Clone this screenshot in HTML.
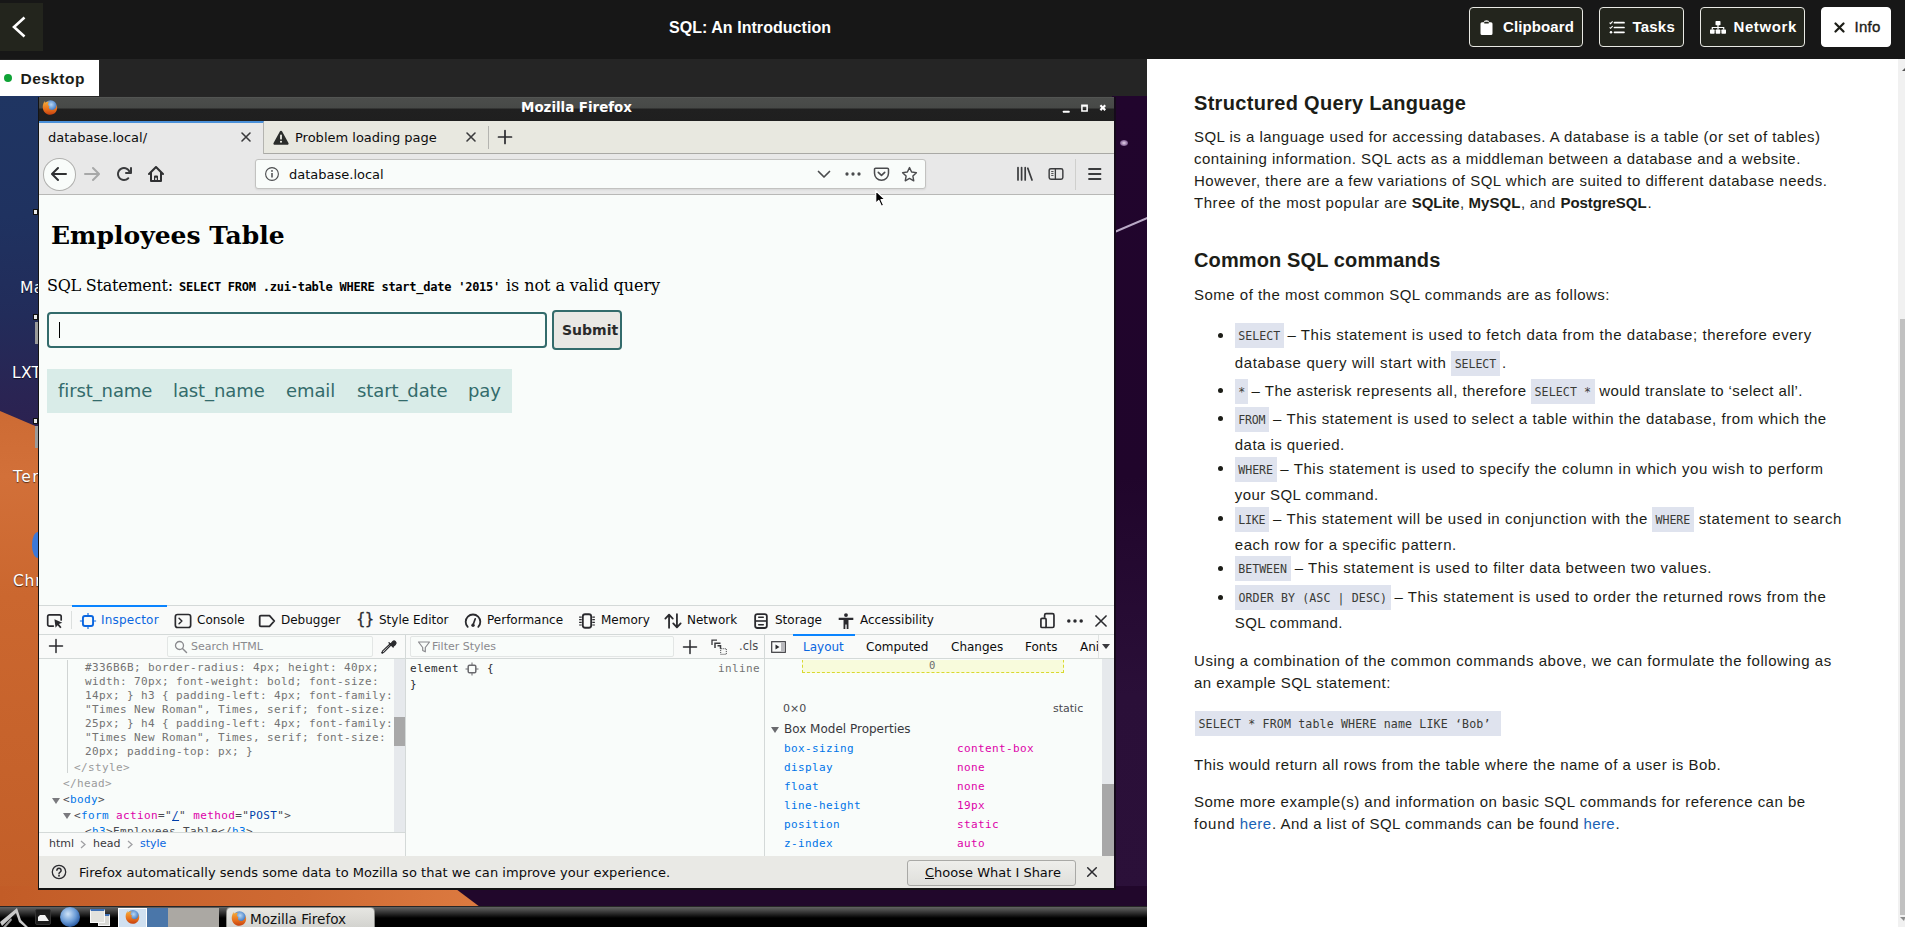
<!DOCTYPE html>
<html lang="en">
<head>
<meta charset="utf-8">
<title>SQL: An Introduction</title>
<style>
*{box-sizing:border-box}
html,body{margin:0;padding:0}
body{width:1905px;height:927px;overflow:hidden;background:#fff;position:relative;font-family:"Liberation Sans",sans-serif;color:#1c1d17}
.abs{position:absolute}
svg{display:block}
/* ---------- top header ---------- */
#hdr{position:absolute;left:0;top:0;width:1905px;height:59px;background:#171717}
#back{position:absolute;left:0;top:3px;width:43px;height:48px;background:#23251d}
#title{position:absolute;left:550px;width:400px;top:18px;letter-spacing:.05px;text-align:center;color:#fff;font-weight:700;font-size:16px;line-height:20px}
.hbtn{position:absolute;top:7px;height:40px;border:1px solid #e9e9e4;border-radius:4px;background:#23251d;color:#fff;font-weight:700;font-size:15px;line-height:38px;white-space:nowrap}
.hbtn svg{position:absolute}
.hbtn span{position:absolute;top:0}
/* ---------- desktop strip ---------- */
#strip{position:absolute;left:0;top:59px;width:1147px;height:37px;background:#252525}
#dtab{position:absolute;left:0;top:1px;width:99px;height:36px;background:#fff;color:#1c1d17;font-weight:700;font-size:15.500px;line-height:36px}
#dtab i{position:absolute;left:4px;top:14px;width:8px;height:8px;border-radius:50%;background:#0fa336}
#dtab span{position:absolute;left:20.500px;top:1px;letter-spacing:.45px}
/* ---------- desktop ---------- */
#desk{position:absolute;left:0;top:96px;width:1147px;height:831px;overflow:hidden;background:#21072c}
/* ---------- right panel ---------- */
#panel{position:absolute;left:1147px;top:59px;width:758px;height:868px;background:#fff;overflow:hidden}

/* ---------- wallpaper ---------- */
#wpL{position:absolute;left:0;top:0;width:40px;height:811px;background:linear-gradient(180deg,#1f3562 0px,#1f3260 120px,#222c5a 220px,#2a2453 300px,#2c2150 340px)}#wpO{position:absolute;left:0;top:300px;width:40px;height:511px;background:linear-gradient(180deg,#cc6a33 0,#d27039 80px,#cb672f 200px,#c25e28 511px);clip-path:polygon(0 15px,40px 32px,40px 511px,0 511px)}
#wpB{position:absolute;left:0;top:790px;width:1147px;height:21px;background:#21072b}
#wpBo{position:absolute;left:0;top:790px;width:480px;height:21px;background:linear-gradient(90deg,#c25c27 0,#cf6a33 300px,#dc7a40 480px);clip-path:polygon(0 0,452px 0,480px 21px,0 21px)}
#wpR{position:absolute;left:1112px;top:0;width:35px;height:811px;background:linear-gradient(180deg,#21052d 0,#20052b 380px,#2a0f38 600px,#2b1039 811px)}
/* ---------- firefox window ---------- */
#ff{position:absolute;left:38px;top:1px;width:1078px;height:793px;background:#f9fcfa;border-left:1px solid #141414;border-right:2px solid #150a1a;border-bottom:2px solid #141414;font-family:"DejaVu Sans","Liberation Sans",sans-serif;font-size:13px;color:#0c0c0d}
#ff .in{position:absolute;left:0;top:0;width:1075px;height:791px;overflow:hidden}
#tbar{position:absolute;left:0;top:0;width:1075px;height:24px;background:linear-gradient(180deg,#5a5c5a 0,#4b4d4b 1px,#474947 11px,#202020 12px,#1f1f1f 24px)}
#tbar .t{position:absolute;left:0;width:1075px;top:3px;text-align:center;color:#fff;font-weight:700;font-size:13.4px;line-height:16px}
#tabs{position:absolute;left:0;top:24px;width:1075px;height:33px;background:#e8e8e0;border-bottom:1px solid #a9a9a5}
#tab1{position:absolute;left:0;top:0;width:225px;height:33px;background:#e8e8e8;border-top:2px solid #4a90d9;border-right:1px solid #b4b4b0}
#tabs .lbl{position:absolute;top:8.5px;line-height:16px;white-space:nowrap}
#nav{position:absolute;left:0;top:57px;width:1075px;height:41px;background:#e8e8e8;border-bottom:1px solid #b8b8b6}
#url{position:absolute;left:216px;top:4.500px;width:671px;height:30px;background:#f9fcfa;border:1px solid #c2c2c0;border-radius:3px;box-shadow:0 1px 2px rgba(0,0,0,.08)}
#url .lbl{position:absolute;left:33px;top:6px;line-height:17px}
#bk{position:absolute;left:3.5px;top:3.5px;width:33.5px;height:33px;border-radius:50%;background:#f9fcfa;border:1px solid #b0b0ae}

.ic{position:absolute}

/* ---------- page content ---------- */
#pg{position:absolute;left:0;top:98px;width:1075px;height:410px;background:#f9fcfa;color:#000}
#pg h3{position:absolute;margin:0;left:12px;top:26px;font-family:"DejaVu Serif","Liberation Serif",serif;font-weight:700;font-size:25px;line-height:30px;white-space:nowrap}
#pg .st{position:absolute;left:8px;top:80.5px;font-family:"DejaVu Serif","Liberation Serif",serif;font-size:16px;line-height:20px;white-space:nowrap}
#pg .st code{position:absolute;left:132px;top:1px;font-family:"DejaVu Sans Mono","Liberation Mono",monospace;font-weight:700;font-size:12px;letter-spacing:-.245px}
#pg .st b{position:absolute;left:459px;top:0;font-weight:400;letter-spacing:-.07px}
#pg .inp{position:absolute;left:8px;top:117px;width:500px;height:36px;border:2px solid #336b6b;border-radius:4px;background:#f9fcfa}
#pg .inp i{position:absolute;left:10px;top:8px;width:1px;height:16px;background:#000}
#pg .sub{position:absolute;left:513px;top:115px;width:70px;height:40px;border:2px solid #336b6b;border-radius:4px;background:#e9e8e4;font-family:"DejaVu Sans","Liberation Sans",sans-serif;font-weight:700;font-size:14px;line-height:36px;color:#2a2a2a;white-space:nowrap;overflow:hidden}
#pg .sub span{position:absolute;left:8px;top:0}
#pg .tbl{position:absolute;left:8px;top:174px;width:465px;height:43.5px;background:#d9ece8;font-family:"DejaVu Sans","Liberation Sans",sans-serif;font-size:18px;color:#336b6b;line-height:43px}
#pg .tbl span{position:absolute;top:0;white-space:nowrap;letter-spacing:-.1px}

/* ---------- devtools ---------- */
#dt{position:absolute;left:0;top:508px;width:1075px;height:283px;background:#f9fcfa;font-size:12px;color:#0c0c0d}
#dt .tb1{position:absolute;left:0;top:0;width:1075px;height:30px;background:#f9faf9;border-top:1px solid #d4d9d8;border-bottom:1px solid #d4d9d8}
#dt .tb1 span{position:absolute;top:6px;line-height:16px;white-space:nowrap}
#dt .tb2{position:absolute;left:0;top:30px;width:1075px;height:24px;background:#f9faf9;border-bottom:1px solid #d4d9d8}
#dt .tb2 span{position:absolute;top:3px;line-height:16px;white-space:nowrap}
#dt .sb{position:absolute;top:1px;height:21px;background:#f9fcfa;border:1px solid #e3e6e5;border-radius:2px}
.mono{font-family:"DejaVu Sans Mono","Liberation Mono",monospace;font-size:11px;letter-spacing:.378px;white-space:pre}
#mk{position:absolute;left:0;top:55px;width:355px;height:172px;overflow:hidden}
#mk div{position:absolute;line-height:14px;height:14px}
#mk .g{color:#737373}
#mk .lg{color:#9a9a9a}
#mk .t{color:#0074e8}
#mk .a{color:#dd00a9}
#mk .v{color:#003eaa}
#mk .p{color:#4a4a4f}
.tri{position:absolute;width:0;height:0;border-left:4.5px solid transparent;border-right:4.5px solid transparent;border-top:6px solid #7a7a7e}
#bc{position:absolute;left:0;top:227px;width:366px;height:24px;background:#f9faf9;border-top:1px solid #d4d9d8}
#bc span{position:absolute;top:2.800px;line-height:16px;font-size:11px}
#nb{position:absolute;left:0;top:251px;width:1075px;height:32px;background:#e9e9e5;font-size:13px}
#nb span{position:absolute;top:8.600px;line-height:16px;white-space:nowrap}
#nb .btn{position:absolute;left:868px;top:3.500px;width:169px;height:26px;border:1px solid #a9a9a6;border-radius:3px;background:linear-gradient(#eeeeeb,#dfdfdb)}
#ly .k{position:absolute;left:19px;color:#0074e8}
#ly .val{position:absolute;left:192px;color:#dd00a9}
#ly div{line-height:14px}

/* ---------- taskbar ---------- */
#tk{position:absolute;left:0;top:810px;width:1147px;height:21px;background:linear-gradient(180deg,#0a0a0a 0,#5e5e5e 1.500px,#4a4a4a 4px,#1c1c1c 9px,#000 12px,#000 21px)}
#tk .pg{position:absolute;top:2px;height:19px}
#tk .tbtn{position:absolute;left:226px;top:1px;width:149px;height:22px;border:1px solid #8a8a86;border-radius:4px 4px 0 0;background:linear-gradient(#e6e6e2,#d2d2ce);font-family:"DejaVu Sans","Liberation Sans",sans-serif;font-size:13.600px;color:#111;line-height:20px}
#tk .tbtn span{position:absolute;left:23px;top:1px;white-space:nowrap}
.dl{position:absolute;color:#fff;font-family:"DejaVu Sans","Liberation Sans",sans-serif;font-size:15.500px;line-height:18px;white-space:nowrap;text-shadow:0 1px 1px rgba(0,0,0,.6)}

#panel span{position:absolute;white-space:pre;font-size:15px;line-height:22px;color:#1c1d17}
#panel span.h{font-size:20px;font-weight:700;line-height:26px}
#panel span.b{font-weight:700}
#panel span.a{color:#1a62b5}
#panel code{position:absolute;height:25px;background:#dfe3ee;font-family:"DejaVu Sans Mono","Liberation Mono",monospace;font-size:11.600px;line-height:26px;color:#3a3b36;white-space:pre;padding-left:3.500px;overflow:hidden}
#panel i{position:absolute;width:5px;height:5px;border-radius:50%;background:#1c1d17}
#sbar{position:absolute;left:751px;top:0;width:7px;height:868px;background:#f1f1f1}
#sbar b{position:absolute;left:2px;top:260px;width:5px;height:596px;background:#c1c1c1}
</style>
</head>
<body>
<div id="hdr">
  <div id="back"><svg width="43" height="48" viewBox="0 0 43 48"><path d="M24.5 14.5 L14 24 L24.5 33.5" fill="none" stroke="#fff" stroke-width="2.600" stroke-linecap="butt"/></svg></div>
  <div id="title">SQL: An Introduction</div>
  <div class="hbtn" style="left:1469px;width:114px"><svg style="left:10px;top:12px" width="13" height="15" viewBox="0 0 13 15"><path d="M2 2.200h1.800a2.700 1.900 0 0 1 5.400 0H11a1.500 1.500 0 0 1 1.500 1.500V13.500A1.500 1.500 0 0 1 11 15H2A1.500 1.500 0 0 1 .5 13.500V3.700A1.500 1.500 0 0 1 2 2.200z" fill="#fff"/><rect x="4.200" y="1.800" width="4.600" height="1.700" rx=".6" fill="#23251d"/></svg><span style="left:33px;letter-spacing:.1px">Clipboard</span></div>
  <div class="hbtn" style="left:1599px;width:85px"><svg style="left:9px;top:13px" width="16" height="13" viewBox="0 0 16 13"><path d="M5.500 1.700h9.500M5.500 6.500h9.500M5.500 11.300h9.500" stroke="#fff" stroke-width="1.700" stroke-linecap="round"/><path d="M.6 1.600l1 1L3.600.4M.6 6.300l1 1 2-2.200" fill="none" stroke="#fff" stroke-width="1.100"/><circle cx="2" cy="11.300" r="1.250" fill="#fff"/></svg><span style="left:32.500px;letter-spacing:.2px">Tasks</span></div>
  <div class="hbtn" style="left:1700px;width:105px"><svg style="left:9px;top:13px" width="16" height="13" viewBox="0 0 16 13"><g fill="#fff"><rect x="5.500" y="0" width="5" height="4.300" rx=".7"/><rect x="0" y="8.500" width="4.600" height="4.300" rx=".7"/><rect x="5.700" y="8.500" width="4.600" height="4.300" rx=".7"/><rect x="11.400" y="8.500" width="4.600" height="4.300" rx=".7"/></g><path d="M8 4v4.500M2.300 8.500v-2h11.400v2" fill="none" stroke="#fff" stroke-width="1.200"/></svg><span style="left:32.500px;letter-spacing:.6px">Network</span></div>
  <div class="hbtn" style="left:1821px;width:70px;background:#fff;color:#1c1d17;border-color:#fff"><svg style="left:12px;top:14px" width="11" height="11" viewBox="0 0 11 11"><path d="M1.500 1.500l8 8M9.500 1.500l-8 8" stroke="#1c1d17" stroke-width="2.200" stroke-linecap="round"/></svg><span style="left:32.500px;letter-spacing:.3px;font-weight:400;-webkit-text-stroke:.35px #1c1d17">Info</span></div>
</div>
<div id="strip"><div id="dtab"><i></i><span>Desktop</span></div></div>
<div id="desk">
<div class="ic" style="left:38px;top:0;width:1078px;height:1px;background:#262626"></div><div id="wpL"></div><div id="wpO"></div><div id="wpR"></div><div id="wpB"></div><div id="wpBo"></div>
<div class="dl" style="left:20px;top:183px;letter-spacing:.5px">Ma</div><div class="dl" style="left:12px;top:268px;letter-spacing:.3px">LXT</div><div class="dl" style="left:13px;top:372px;letter-spacing:1.500px">Ter</div><div class="dl" style="left:13px;top:476px;letter-spacing:.8px">Chr</div>
<div class="ic" style="left:33px;top:113px;width:5px;height:6px;background:#e8e8e8;border:1px solid #111"></div><div class="ic" style="left:33px;top:218px;width:5px;height:6px;background:#e8e8e8;border:1px solid #111"></div><div class="ic" style="left:33px;top:322px;width:5px;height:6px;background:#e8e8e8;border:1px solid #111"></div>
<div class="ic" style="left:35px;top:226px;width:3px;height:22px;background:#9a9a9a"></div><div class="ic" style="left:35px;top:330px;width:3px;height:22px;background:#9a9a9a"></div>
<div class="ic" style="left:32px;top:436px;width:12px;height:26px;border-radius:50%;background:#3b78d8"></div>
<div class="ic" style="left:1120px;top:44px;width:8px;height:6px;border-radius:50%;background:radial-gradient(#e8d8ee,#8a6a9a 60%,rgba(60,30,80,0) 100%)"></div>
<div class="ic" style="left:1110px;top:128px;width:42px;height:2px;background:#b9a9c6;transform:rotate(-23deg);transform-origin:50% 50%"></div>
<div id="ff"><div class="in">
  <div id="tbar"><div class="t">Mozilla Firefox</div>
<svg class="ic" style="left:2px;top:1px" width="18" height="18" viewBox="0 0 18 18"><defs><radialGradient id="fg1" cx=".55" cy=".35" r=".6"><stop offset="0" stop-color="#b9d6f2"/><stop offset=".6" stop-color="#5a8fd0"/><stop offset="1" stop-color="#2a4f9a"/></radialGradient><linearGradient id="fg2" x1="0" y1="0" x2="0" y2="1"><stop offset="0" stop-color="#f7b13c"/><stop offset=".6" stop-color="#e8711c"/><stop offset="1" stop-color="#c5400f"/></linearGradient></defs><circle cx="9.5" cy="8.5" r="6.3" fill="url(#fg1)"/><path d="M2.2 6.2C1.2 9 1.8 13 5 15.4c3 2.200 7.600 1.600 9.800-1.400 1.600-2.200 1.800-5.200.6-7.600.2 2-.4 3.400-1.400 4.400-1.400 1.400-3.800 1.600-5.200.4-1.200-1-1.200-2.400-.2-3.200-1.200-.2-1.800-1-1.600-2.200.1-.8.800-1.600 1.600-2C6.400 3.400 4.800 3.800 3.800 5c0-.8.200-1.600.6-2.200C3.200 3.600 2.500 4.800 2.200 6.200z" fill="url(#fg2)"/></svg>
<svg class="ic" style="left:1020px;top:5.500px" width="52" height="13.500" viewBox="0 0 54 14"><g fill="#fff"><rect x="4" y="8" width="7" height="2.2" rx=".6"/><path d="M23 1.600h7v7.400h-7zM24.600 4v3.400h3.800V4z"/><path d="M42.200 3.200l1.600-1.600 1.700 1.700 1.700-1.700 1.600 1.600-1.700 1.700 1.700 1.700-1.600 1.600-1.700-1.700-1.700 1.700-1.600-1.600 1.700-1.700z"/></g></svg>
</div>
  <div id="tabs">
    <div id="tab1"><span class="lbl" style="left:9px;top:7px">database.local/</span></div>
    <span class="lbl" style="left:256px">Problem loading page</span>
<svg class="ic" style="left:199px;top:8px" width="16" height="16" viewBox="0 0 16 16"><path d="M4 4L12 12M12 4L4 12" stroke="#3a3a3c" stroke-width="1.6" stroke-linecap="round" fill="none"/></svg><svg class="ic" style="left:424px;top:8px" width="16" height="16" viewBox="0 0 16 16"><path d="M4 4L12 12M12 4L4 12" stroke="#3a3a3c" stroke-width="1.6" stroke-linecap="round" fill="none"/></svg>
    <svg class="ic" style="left:234px;top:9px" width="16" height="15" viewBox="0 0 16 15"><path d="M8 .8a1.300 1.300 0 0 1 1.150.700l6.300 11.400a1.300 1.300 0 0 1-1.150 1.900H1.700a1.300 1.300 0 0 1-1.150-1.900L6.850 1.500A1.300 1.300 0 0 1 8 .8z" fill="#2b2d2b"/><rect x="7.100" y="4.600" width="1.800" height="5" rx=".9" fill="#f0f0e8"/><circle cx="8" cy="11.800" r="1.050" fill="#f0f0e8"/></svg>
    <div class="ic" style="left:449px;top:5px;width:1px;height:23px;background:#b4b4b0"></div>
    <svg class="ic" style="left:458px;top:8px" width="16" height="16" viewBox="0 0 16 16"><path d="M8 1.500v13M1.500 8h13" stroke="#2a2a2e" stroke-width="1.700" stroke-linecap="round"/></svg>
  </div>
  <div id="nav">
    <div id="bk"></div>
    <svg class="ic" style="left:12px;top:12px" width="16" height="16" viewBox="0 0 16 16"><path d="M15 7H3.414l4.293-4.293a1 1 0 0 0-1.414-1.414l-6 6a1 1 0 0 0 0 1.414l6 6a1 1 0 0 0 1.414-1.414L3.414 9H15a1 1 0 0 0 0-2z" fill="#2f3032"/></svg>
    <svg class="ic" style="left:45px;top:12px" width="16" height="16" viewBox="0 0 16 16"><path d="M1 7h11.586L8.293 2.707a1 1 0 0 1 1.414-1.414l6 6a1 1 0 0 1 0 1.414l-6 6a1 1 0 0 1-1.414-1.414L12.586 9H1a1 1 0 0 1 0-2z" fill="#a7a8a8"/></svg>
    <svg class="ic" style="left:77px;top:12px" width="16" height="16" viewBox="0 0 16 16"><path d="M15 1a1 1 0 0 0-1 1v2.418A6.995 6.995 0 1 0 8 15a6.954 6.954 0 0 0 4.950-2.050 1 1 0 0 0-1.414-1.414A5.019 5.019 0 1 1 12.549 6H10a1 1 0 0 0 0 2h5a1 1 0 0 0 1-1V2a1 1 0 0 0-1-1z" fill="#3a3b3d"/></svg>
    <svg class="ic" style="left:109px;top:12px" width="16" height="16" viewBox="0 0 16 16"><path d="M15.707 7.293l-7-7a1 1 0 0 0-1.414 0l-7 7a1 1 0 0 0 1.414 1.414L2 8.414V15a1 1 0 0 0 1 1h10a1 1 0 0 0 1-1V8.414l.293.293a1 1 0 0 0 1.414-1.414zM12 14H4V6.414l4-4 4 4z" fill="#2f3032"/><path d="M6 15v-4.500a1 1 0 0 1 1-1h2a1 1 0 0 1 1 1V15H8.800v-3.300H7.200V15z" fill="#2f3032"/></svg>
    <div id="url"><span class="lbl">database.local</span>
      <svg class="ic" style="left:8px;top:6.500px" width="16" height="16" viewBox="0 0 16 16"><circle cx="8" cy="8" r="6.400" fill="none" stroke="#4a4b4d" stroke-width="1.100"/><rect x="7.250" y="7" width="1.500" height="4.500" fill="#4a4b4d"/><circle cx="8" cy="4.900" r=".950" fill="#4a4b4d"/></svg>
      <svg class="ic" style="left:560px;top:6.500px" width="16" height="16" viewBox="0 0 16 16"><path d="M2.500 5.500L8 11l5.500-5.500" fill="none" stroke="#4a4b4d" stroke-width="1.700" stroke-linecap="round" stroke-linejoin="round"/></svg>
      <svg class="ic" style="left:588px;top:6.500px" width="18" height="16" viewBox="0 0 18 16"><g fill="#4a4b4d"><circle cx="3" cy="8" r="1.650"/><circle cx="9" cy="8" r="1.650"/><circle cx="15" cy="8" r="1.650"/></g></svg>
      <svg class="ic" style="left:617px;top:6.500px" width="17" height="16" viewBox="0 0 18 16"><path d="M2.800 1.800h12.400a1.200 1.200 0 0 1 1.200 1.200v4.200a7.400 7.400 0 0 1-14.800 0V3a1.200 1.200 0 0 1 1.200-1.200z" fill="none" stroke="#4a4b4d" stroke-width="1.600"/><path d="M5.600 6.200L9 9.500l3.400-3.300" fill="none" stroke="#4a4b4d" stroke-width="1.700" stroke-linecap="round" stroke-linejoin="round"/></svg>
      <svg class="ic" style="left:645px;top:6.500px" width="17" height="17" viewBox="0 0 18 18"><path d="M9 1.700l2.250 4.650 5.050.700-3.700 3.550.900 5.050L9 13.200l-4.500 2.450.900-5.050-3.700-3.550 5.050-.700z" fill="none" stroke="#4a4b4d" stroke-width="1.500" stroke-linejoin="round"/></svg>
    </div>
    <svg class="ic" style="left:977px;top:11px" width="18" height="18" viewBox="0 0 18 18"><path d="M2 2.500v12.500M5.600 2.500v12.500M9.200 2.500v12.500M11.800 3.200l4.200 11.800" stroke="#3a3b3d" stroke-width="1.700" stroke-linecap="round" fill="none"/></svg>
    <svg class="ic" style="left:1009px;top:12px" width="16" height="16" viewBox="0 0 18 18"><rect x="1.300" y="3" width="15.400" height="12" rx="2" fill="none" stroke="#3a3b3d" stroke-width="1.600"/><path d="M8.300 3v12" stroke="#3a3b3d" stroke-width="1.500"/><path d="M3.600 6.200h2.600M3.600 8.400h2.600M3.600 10.600h2.600" stroke="#3a3b3d" stroke-width="1"/></svg>
    <div class="ic" style="left:1036px;top:5px;width:1px;height:31px;background:#cfcfcd"></div>
    <svg class="ic" style="left:1047.500px;top:12px" width="16" height="16" viewBox="0 0 16 16"><path d="M2 3h11.500M2 8h11.500M2 13h11.500" stroke="#3a3b3d" stroke-width="1.800" stroke-linecap="round"/></svg>
  </div>
<div id="pg">
  <h3>Employees Table</h3>
  <div class="st"><span style="letter-spacing:-.245px">SQL Statement:</span><code>SELECT FROM .zui-table WHERE start_date '2015'</code><b>is not a valid query</b></div>
  <div class="inp"><i></i></div>
  <div class="sub"><span>Submit</span></div>
  <div class="tbl"><span style="left:11px">first_name</span><span style="left:126px">last_name</span><span style="left:239px">email</span><span style="left:310px">start_date</span><span style="left:421px">pay</span></div>
</div>
<div id="dt"><div class="tb1"><svg class="ic" style="left:7px;top:5.500px" width="18" height="18" viewBox="0 0 16 16"><path d="M13.500 7V4a1.500 1.500 0 0 0-1.500-1.500H3A1.500 1.500 0 0 0 1.500 4v7A1.500 1.500 0 0 0 3 12.500h3.500" fill="none" stroke="#2a2a2e" stroke-width="1.500" stroke-linecap="round"/><path d="M7.500 6.500l7 3-3 1.200 2.300 2.800-1.200 1-2.300-2.800-1.800 2.300z" fill="#2a2a2e"/></svg><div class="ic" style="left:32px;top:5px;width:1px;height:18px;background:#dcdfde"></div><div class="ic" style="left:33px;top:-1px;width:95px;height:2px;background:#0a84ff"></div><svg class="ic" style="left:40px;top:5.500px" width="18" height="18" viewBox="0 0 16 16"><rect x="3.500" y="3.500" width="9" height="9" rx="1.800" fill="none" stroke="#0a66e0" stroke-width="1.700"/><path d="M8 .800v2.500M8 12.700v2.500M.800 8h2.500M12.700 8h2.500" stroke="#0a66e0" stroke-width="1"/></svg><span style="left:62px;color:#0a66e0;letter-spacing:.2px">Inspector</span><svg class="ic" style="left:135px;top:5.500px" width="18" height="18" viewBox="0 0 16 16"><rect x="1.200" y="2.200" width="13.600" height="11.600" rx="2" fill="none" stroke="#2a2a2e" stroke-width="1.500"/><path d="M4.500 5.500L7 8l-2.500 2.500" fill="none" stroke="#2a2a2e" stroke-width="1.300" stroke-linecap="round" stroke-linejoin="round"/></svg><span style="left:158px">Console</span><svg class="ic" style="left:219px;top:5.500px" width="18" height="18" viewBox="0 0 16 16"><path d="M2.500 3.200h7.700l4.300 4.800-4.300 4.800H2.500a1 1 0 0 1-1-1V4.200a1 1 0 0 1 1-1z" fill="none" stroke="#2a2a2e" stroke-width="1.600" stroke-linejoin="round"/></svg><span style="left:242px">Debugger</span><span style="left:317px;top:5px;font-size:15px;letter-spacing:-.8px;font-weight:400;color:#2a2a2e;-webkit-text-stroke:.3px #2a2a2e">{}</span><span style="left:340px">Style Editor</span><svg class="ic" style="left:425px;top:5.500px" width="18" height="18" viewBox="0 0 16 16"><path d="M3.300 13.200A6.500 6.500 0 1 1 12.700 13.200" fill="none" stroke="#2a2a2e" stroke-width="1.600" stroke-linecap="round"/><path d="M8 11.500L10 6" stroke="#2a2a2e" stroke-width="1.500" stroke-linecap="round"/><circle cx="8" cy="11.800" r="1.500" fill="#2a2a2e"/></svg><span style="left:448px">Performance</span><svg class="ic" style="left:539px;top:5.500px" width="18" height="18" viewBox="0 0 16 16"><rect x="4.300" y="2" width="7.400" height="12" rx="2" fill="none" stroke="#2a2a2e" stroke-width="1.600"/><path d="M1 4.500h2.300M1 6.800h2.300M1 9.200h2.300M1 11.500h2.300M12.700 4.500H15M12.700 6.800H15M12.700 9.200H15M12.700 11.500H15" stroke="#2a2a2e" stroke-width="1"/></svg><span style="left:562px">Memory</span><svg class="ic" style="left:625px;top:5.500px" width="18" height="18" viewBox="0 0 16 16"><path d="M4.500 14V2.500M1.200 5.800L4.500 2.300l3.300 3.500M11.500 2v11.500M8.200 10.200l3.300 3.500 3.300-3.500" fill="none" stroke="#2a2a2e" stroke-width="1.600" stroke-linecap="round" stroke-linejoin="round"/></svg><span style="left:648px">Network</span><svg class="ic" style="left:713px;top:5.500px" width="18" height="18" viewBox="0 0 16 16"><rect x="2.800" y="1.800" width="10.400" height="12.400" rx="2" fill="none" stroke="#2a2a2e" stroke-width="1.600"/><path d="M2.800 8h10.400" stroke="#2a2a2e" stroke-width="1.400"/><path d="M6 4.600h4M6 11.400h4" stroke="#2a2a2e" stroke-width="1.400" stroke-linecap="round"/></svg><span style="left:736px">Storage</span><svg class="ic" style="left:798px;top:5.500px" width="18" height="18" viewBox="0 0 16 16"><circle cx="8" cy="2.700" r="1.700" fill="#2a2a2e"/><path d="M1.500 5.200h13v1.800h-4.300V15H8.600v-4H7.400v4H5.800V7H1.500z" fill="#2a2a2e"/></svg><span style="left:821px">Accessibility</span><svg class="ic" style="left:1000px;top:5.500px" width="18" height="18" viewBox="0 0 16 16"><path d="M5.500 13.800H12a1.300 1.300 0 0 0 1.300-1.300V2.800A1.300 1.300 0 0 0 12 1.500H6.300A1.300 1.300 0 0 0 5 2.800V5" fill="none" stroke="#2a2a2e" stroke-width="1.500"/><rect x="1.700" y="5.700" width="4.600" height="8.100" rx="1" fill="none" stroke="#2a2a2e" stroke-width="1.500"/></svg><svg class="ic" style="left:1027px;top:5.500px" width="18" height="18" viewBox="0 0 16 16"><g fill="#2a2a2e"><circle cx="2.500" cy="8" r="1.550"/><circle cx="8" cy="8" r="1.550"/><circle cx="13.500" cy="8" r="1.550"/></g></svg><svg class="ic" style="left:1053px;top:5.500px" width="18" height="18" viewBox="0 0 16 16"><path d="M3.500 3.500l9 9M12.500 3.500l-9 9" stroke="#2a2a2e" stroke-width="1.400" stroke-linecap="round"/></svg></div><div class="tb2"><svg class="ic" style="left:9px;top:3px" width="16" height="16" viewBox="0 0 16 16"><path d="M8 1.500v13M1.500 8h13" stroke="#2a2a2e" stroke-width="1.500" stroke-linecap="round"/></svg><div class="sb" style="left:128px;width:206px"></div><svg class="ic" style="left:135px;top:5px" width="14" height="14" viewBox="0 0 14 14"><circle cx="5.500" cy="5.500" r="4" fill="none" stroke="#8a8a8e" stroke-width="1.300"/><path d="M8.500 8.500l4 4" stroke="#8a8a8e" stroke-width="1.500" stroke-linecap="round"/></svg><span style="left:152px;color:#8a8a8e;font-size:11px;top:3.500px">Search HTML</span><svg class="ic" style="left:341px;top:3px" width="18" height="18" viewBox="0 0 18 18"><path d="M11 7L4 14.200c-.6.600-1.300.300-1.800 1l-.5-.5c.7-.500.400-1.200 1-1.800L10 6" fill="none" stroke="#2a2a2e" stroke-width="1.100"/><path d="M9 4.800l4.200 4.200M10.500 6.300l2.200-2.600a1.900 1.900 0 0 1 2.700 2.700l-2.600 2.200z" fill="#2a2a2e" stroke="#2a2a2e" stroke-width="1.300" stroke-linecap="round"/></svg><div class="ic" style="left:366px;top:0;width:1px;height:24px;background:#d4d9d8"></div><div class="sb" style="left:371px;width:264px"></div><svg class="ic" style="left:378px;top:5px" width="14" height="14" viewBox="0 0 14 14"><path d="M1.500 2h11L8.300 7.500v4.300L5.700 10.500v-3z" fill="none" stroke="#8a8a8e" stroke-width="1.200" stroke-linejoin="round"/></svg><span style="left:393px;color:#8a8a8e;font-size:11px;top:3.500px">Filter Styles</span><svg class="ic" style="left:643px;top:4px" width="16" height="16" viewBox="0 0 16 16"><path d="M8 1.500v13M1.500 8h13" stroke="#2a2a2e" stroke-width="1.500" stroke-linecap="round"/></svg><svg class="ic" style="left:671px;top:3px" width="18" height="18" viewBox="0 0 18 18"><path d="M2 7V2.200h5" fill="none" stroke="#3a3a3e" stroke-width="1.300"/><path d="M5 10V5.200h5.500M7.500 7.800h3v3" fill="none" stroke="#3a3a3e" stroke-width="1.500"/><rect x="10.700" y="10.700" width="5.600" height="5.600" fill="none" stroke="#3a3a3e" stroke-width="1" stroke-dasharray="1 1"/></svg><span style="left:700px;color:#4a4a4f;font-size:11.500px">.cls</span><div class="ic" style="left:725px;top:0;width:1px;height:24px;background:#d4d9d8"></div><svg class="ic" style="left:732px;top:5px" width="15" height="14" viewBox="0 0 15 14"><rect x=".700" y="1.700" width="13.600" height="10.600" fill="none" stroke="#3a3a3e" stroke-width="1.200"/><rect x="10" y="2.300" width="3.700" height="9.400" fill="#b9b9bd"/><path d="M4.500 4.500l4 2.500-4 2.500z" fill="#2a2a2e"/></svg><div class="ic" style="left:754px;top:-1px;width:62px;height:2px;background:#0a84ff"></div><span style="left:764px;color:#0a66e0;top:3.500px">Layout</span><span style="left:827px;top:3.500px">Computed</span><span style="left:912px;top:3.500px">Changes</span><span style="left:986px;top:3.500px">Fonts</span><span style="left:1041px;top:3.500px">Ani</span><div class="ic" style="left:1059px;top:0;width:16px;height:23px;background:#f9faf9;border-left:1px solid #e0e3e2"></div><div class="tri" style="left:1063px;top:9px;border-top-color:#3a3a3e;border-left-width:4px;border-right-width:4px;border-top-width:5px"></div></div><div id="mk"><div style="left:28px;top:0;width:1px;height:113px;background:#d0d4d3"></div><div class="mono g" style="left:46px;top:1.3999999999999773px">#336B6B; border-radius: 4px; height: 40px;</div><div class="mono g" style="left:46px;top:15.299999999999955px">width: 70px; font-weight: bold; font-size:</div><div class="mono g" style="left:46px;top:29.200000000000045px">14px; } h3 { padding-left: 4px; font-family:</div><div class="mono g" style="left:46px;top:43.10000000000002px">&quot;Times New Roman&quot;, Times, serif; font-size:</div><div class="mono g" style="left:46px;top:57px">25px; } h4 { padding-left: 4px; font-family:</div><div class="mono g" style="left:46px;top:71px">&quot;Times New Roman&quot;, Times, serif; font-size:</div><div class="mono g" style="left:46px;top:85px">20px; padding-top: px; }</div><div class="mono lg" style="left:35px;top:101px">&lt;/style&gt;</div><div class="mono lg" style="left:24px;top:117px">&lt;/head&gt;</div><div class="tri" style="left:13px;top:137.500px"></div><div class="mono " style="left:24px;top:133.29999999999995px"><span class="p">&lt;</span><span class="t">body</span><span class="p">&gt;</span></div><div class="tri" style="left:24px;top:153px"></div><div class="mono " style="left:35px;top:149px"><span class="p">&lt;</span><span class="t">form</span> <span class="a">action</span><span class="p">=&quot;</span><span class="v" style="text-decoration:underline">/</span><span class="p">&quot;</span> <span class="a">method</span><span class="p">=&quot;</span><span class="v">POST</span><span class="p">&quot;&gt;</span></div><div class="mono " style="left:46px;top:165px"><span class="p">&lt;</span><span class="t">h3</span><span class="p">&gt;</span><span class="p">Employees Table</span><span class="p">&lt;/</span><span class="t">h3</span><span class="p">&gt;</span></div></div><div class="ic" style="left:355px;top:54px;width:11px;height:173px;background:#e6e9ec"></div><div class="ic" style="left:355px;top:112px;width:11px;height:29px;background:#a8a8a8"></div><div class="ic" style="left:366px;top:54px;width:1px;height:197px;background:#d4d9d8"></div><div class="mono" style="position:absolute;left:371px;top:57px;line-height:14px;color:#2a2a2e">element</div><svg class="ic" style="left:426px;top:57px" width="14" height="14" viewBox="0 0 14 14"><rect x="3.200" y="3.200" width="7.600" height="7.600" rx="1.300" fill="none" stroke="#6a6a6e" stroke-width="1.500"/><path d="M7 .500v2.500M7 11v2.500M.500 7h2.500M11 7h2.500" stroke="#6a6a6e" stroke-width="1"/></svg><div class="mono" style="position:absolute;left:448px;top:57px;line-height:14px;color:#2a2a2e">{</div><div class="mono" style="position:absolute;left:371px;top:73px;line-height:14px;color:#2a2a2e">}</div><div class="mono" style="position:absolute;left:679px;top:57px;line-height:14px;color:#737373">inline</div><div class="ic" style="left:725px;top:54px;width:1px;height:197px;background:#d4d9d8"></div><div id="ly" style="position:absolute;left:726px;top:55px;width:337px;height:196px;overflow:hidden"><div style="position:absolute;left:37px;top:-11px;width:262px;height:24px;background:#f8fbdc;border:1px dashed #d9d930"></div><div class="mono" style="position:absolute;left:164px;top:-2.500px;color:#6a6a6e;font-size:10.500px">0</div><div style="position:absolute;left:18px;top:42px;font-size:11px;color:#4a4a4f">0×0</div><div style="position:absolute;left:288px;top:42px;font-size:11px;color:#4a4a4f">static</div><div class="tri" style="left:6px;top:67px;border-top-color:#6a6a6e;border-left-width:4.500px;border-right-width:4.500px;border-top-width:6px"></div><div style="position:absolute;left:19px;top:62px;font-size:12px;color:#38383d">Box Model Properties</div><div class="mono k" style="top:82px">box-sizing</div><div class="mono val" style="top:82px">content-box</div><div class="mono k" style="top:101px">display</div><div class="mono val" style="top:101px">none</div><div class="mono k" style="top:120px">float</div><div class="mono val" style="top:120px">none</div><div class="mono k" style="top:139px">line-height</div><div class="mono val" style="top:139px">19px</div><div class="mono k" style="top:158px">position</div><div class="mono val" style="top:158px">static</div><div class="mono k" style="top:177px">z-index</div><div class="mono val" style="top:177px">auto</div></div><div class="ic" style="left:1063px;top:54px;width:12px;height:197px;background:#e6e9ec"></div><div class="ic" style="left:1063px;top:179px;width:12px;height:72px;background:#a8a8a8"></div><div id="bc"><span style="left:10px;color:#38383d">html</span><svg class="ic" style="left:40px;top:7px" width="8" height="9" viewBox="0 0 8 9"><path d="M2 1l4 3.500L2 8" fill="none" stroke="#a0a0a4" stroke-width="1.300"/></svg><span style="left:54px;color:#38383d">head</span><svg class="ic" style="left:87px;top:7px" width="8" height="9" viewBox="0 0 8 9"><path d="M2 1l4 3.500L2 8" fill="none" stroke="#a0a0a4" stroke-width="1.300"/></svg><span style="left:101px;color:#0a66e0">style</span></div><div id="nb"><svg class="ic" style="left:12px;top:8px" width="16" height="16" viewBox="0 0 16 16"><circle cx="8" cy="8" r="6.700" fill="none" stroke="#2a2a2e" stroke-width="1.300"/><path d="M5.900 6.300a2.100 2.100 0 1 1 3.200 1.800c-.7.400-1.100.800-1.100 1.600" fill="none" stroke="#2a2a2e" stroke-width="1.500" stroke-linecap="round"/><circle cx="8" cy="11.800" r=".950" fill="#2a2a2e"/></svg><span style="left:40px;letter-spacing:.04px">Firefox automatically sends some data to Mozilla so that we can improve your experience.</span><div class="btn"></div><span style="left:886px"><u>C</u>hoose What I Share</span><svg class="ic" style="left:1045px;top:8px" width="16" height="16" viewBox="0 0 16 16"><path d="M3.700 3.700l8.600 8.600M12.300 3.700l-8.600 8.600" stroke="#2a2a2e" stroke-width="1.500" stroke-linecap="round"/></svg></div></div>
</div></div>
<svg class="ic" style="left:874px;top:92.500px" width="12.500" height="19.300" viewBox="0 0 11 17"><path d="M1.500 1.500v11.200l2.700-2.600 2.300 5.200 2-.9-2.300-5h3.600z" fill="#000" stroke="#fff" stroke-width="1.100" stroke-linejoin="round"/></svg>
<div id="tk">
<svg class="ic" style="left:0;top:1px" width="28" height="20" viewBox="0 0 28 20"><path d="M0 15L17 1l4 12 7 7h-3l-6-5-3-9L2 19z" fill="#c9c9c9"/><path d="M3 20l8-9 1 2-6 7z" fill="#9a9a9a"/></svg>
<div class="ic" style="left:35px;top:3px;width:16px;height:16px;background:#1c1c1c;border-radius:2px;border:1px solid #333"></div><svg class="ic" style="left:37px;top:8px" width="13" height="8" viewBox="0 0 13 8"><path d="M1 7V3l2-2h5l4 6z" fill="#f2f2f2"/></svg>
<div class="ic" style="left:60px;top:1px;width:20px;height:20px;border-radius:50%;background:radial-gradient(circle at 40% 35%,#cfe3f7 0,#6a9bd6 45%,#1d4f9a 80%,#123a7a 100%)"></div>
<div class="ic" style="left:98px;top:8px;width:12px;height:12px;background:#d9d9d5;border:1px solid #f5f5f5;border-top:2px solid #3d6fb5"></div><div class="ic" style="left:90px;top:3px;width:15px;height:14px;background:#e2e2de;border:1px solid #f8f8f8;border-top:2px solid #3d6fb5"></div>
<div class="pg" style="left:118px;width:29px;background:#d0e0f0;border:1px solid #fff;border-bottom:0"></div>
<div class="pg" style="left:147px;width:21px;background:#4a76a9"></div>
<div class="pg" style="left:168px;width:51px;background:#aba8a3"></div>
<svg class="ic" style="left:124px;top:2px" width="17" height="17" viewBox="0 0 18 18"><circle cx="9.500" cy="8.500" r="6.300" fill="url(#fg1)"/><path d="M2.200 6.200C1.200 9 1.800 13 5 15.400c3 2.200 7.600 1.600 9.800-1.400 1.600-2.200 1.800-5.200.6-7.600.2 2-.4 3.400-1.400 4.400-1.400 1.400-3.800 1.600-5.200.4-1.200-1-1.200-2.400-.2-3.200-1.200-.2-1.800-1-1.600-2.200.1-.8.8-1.600 1.600-2C6.400 3.400 4.800 3.800 3.800 5c0-.8.2-1.600.6-2.200C3.200 3.600 2.500 4.800 2.200 6.200z" fill="url(#fg2)"/></svg>
<div class="tbtn"><span>Mozilla Firefox</span></div>
<svg class="ic" style="left:230px;top:3px" width="18" height="18" viewBox="0 0 18 18"><circle cx="9.500" cy="8.500" r="6.300" fill="url(#fg1)"/><path d="M2.200 6.200C1.200 9 1.800 13 5 15.400c3 2.200 7.600 1.600 9.800-1.400 1.600-2.200 1.800-5.200.6-7.600.2 2-.4 3.400-1.400 4.400-1.400 1.400-3.800 1.600-5.200.4-1.200-1-1.200-2.400-.2-3.200-1.200-.2-1.800-1-1.600-2.200.1-.8.8-1.600 1.600-2C6.400 3.400 4.800 3.800 3.800 5c0-.8.2-1.600.6-2.200C3.200 3.600 2.500 4.800 2.200 6.200z" fill="url(#fg2)"/></svg>
</div>
</div>
<div id="panel">
<span class="h" style="left:47.0px;top:30.5px;letter-spacing:0.308px">Structured Query Language</span>
<span style="left:47.0px;top:66.7px;letter-spacing:0.474px">SQL is a language used for accessing databases. A database is a table (or set of tables)</span>
<span style="left:47.0px;top:88.7px;letter-spacing:0.499px">containing information. SQL acts as a middleman between a database and a website.</span>
<span style="left:47.0px;top:110.7px;letter-spacing:0.518px">However, there are a few variations of SQL which are suited to different database needs.</span>
<span style="left:47.0px;top:132.7px;letter-spacing:0.548px">Three of the most popular are</span>
<span class="b" style="left:264.8px;top:132.7px;letter-spacing:-0.107px">SQLite</span>
<span style="left:313.0px;top:132.7px;letter-spacing:0.000px">,</span>
<span class="b" style="left:321.5px;top:132.7px;letter-spacing:0.062px">MySQL</span>
<span style="left:374.0px;top:132.7px;letter-spacing:0.225px">, and</span>
<span class="b" style="left:413.5px;top:132.7px;letter-spacing:-0.069px">PostgreSQL</span>
<span style="left:500.5px;top:132.7px;letter-spacing:0.000px">.</span>
<span class="h" style="left:47.0px;top:188.3px;letter-spacing:0.120px">Common SQL commands</span>
<span style="left:47.0px;top:224.6px;letter-spacing:0.492px">Some of the most common SQL commands are as follows:</span>
<code style="left:87.8px;top:263.9px;width:49.1px;letter-spacing:0.002px">SELECT</code>
<span style="left:140.5px;top:264.9px;letter-spacing:0.560px">– This statement is used to fetch data from the database; therefore every</span>
<span style="left:87.8px;top:292.9px;letter-spacing:0.634px">database query will start with</span>
<code style="left:304.2px;top:291.9px;width:48.7px;letter-spacing:-0.065px">SELECT</code>
<span style="left:355.0px;top:292.9px;letter-spacing:0.000px">.</span>
<code style="left:87.8px;top:319.8px;width:13.2px;letter-spacing:0.000px">*</code>
<span style="left:104.6px;top:320.8px;letter-spacing:0.462px">– The asterisk represents all, therefore</span>
<code style="left:384.0px;top:319.8px;width:63.9px;letter-spacing:0.107px">SELECT *</code>
<span style="left:452.3px;top:320.8px;letter-spacing:0.396px">would translate to ‘select all’.</span>
<code style="left:87.8px;top:347.7px;width:34.0px;letter-spacing:-0.280px">FROM</code>
<span style="left:126.1px;top:348.7px;letter-spacing:0.549px">– This statement is used to select a table within the database, from which the</span>
<span style="left:87.8px;top:374.7px;letter-spacing:0.451px">data is queried.</span>
<code style="left:87.8px;top:397.6px;width:41.9px;letter-spacing:-0.041px">WHERE</code>
<span style="left:133.3px;top:398.6px;letter-spacing:0.567px">– This statement is used to specify the column in which you wish to perform</span>
<span style="left:87.8px;top:424.6px;letter-spacing:0.394px">your SQL command.</span>
<code style="left:87.8px;top:447.5px;width:34.0px;letter-spacing:-0.280px">LIKE</code>
<span style="left:126.1px;top:448.5px;letter-spacing:0.566px">– This statement will be used in conjunction with the</span>
<code style="left:505.0px;top:447.5px;width:41.9px;letter-spacing:-0.041px">WHERE</code>
<span style="left:551.7px;top:448.5px;letter-spacing:0.609px">statement to search</span>
<span style="left:87.8px;top:474.5px;letter-spacing:0.554px">each row for a specific pattern.</span>
<code style="left:87.8px;top:497.4px;width:55.9px;letter-spacing:-0.025px">BETWEEN</code>
<span style="left:147.7px;top:498.4px;letter-spacing:0.547px">– This statement is used to filter data between two values.</span>
<code style="left:87.9px;top:525.9px;width:156.0px;letter-spacing:0.105px">ORDER BY (ASC | DESC)</code>
<span style="left:247.5px;top:526.9px;letter-spacing:0.559px">– This statement is used to order the returned rows from the</span>
<span style="left:87.8px;top:552.8px;letter-spacing:0.362px">SQL command.</span>
<span style="left:47.0px;top:590.6px;letter-spacing:0.552px">Using a combination of the common commands above, we can formulate the following as</span>
<span style="left:47.0px;top:612.5px;letter-spacing:0.460px">an example SQL statement:</span>
<code style="left:48.0px;top:651.5px;width:305.8px;letter-spacing:0.142px">SELECT * FROM table WHERE name LIKE ‘Bob’</code>
<span style="left:47.0px;top:694.5px;letter-spacing:0.500px">This would return all rows from the table where the name of a user is Bob.</span>
<span style="left:47.0px;top:732.3px;letter-spacing:0.488px">Some more example(s) and information on basic SQL commands for reference can be</span>
<span style="left:47.0px;top:754.2px;letter-spacing:0.791px">found</span>
<span class="a" style="left:92.7px;top:754.2px;letter-spacing:0.467px">here</span>
<span style="left:125.0px;top:754.2px;letter-spacing:0.465px">. And a list of SQL commands can be found</span>
<span class="a" style="left:436.5px;top:754.2px;letter-spacing:0.367px">here</span>
<span style="left:468.5px;top:754.2px;letter-spacing:0.000px">.</span>
<i style="left:70.5px;top:273.5px"></i>
<i style="left:70.5px;top:329.4px"></i>
<i style="left:70.5px;top:357.3px"></i>
<i style="left:70.5px;top:407.2px"></i>
<i style="left:70.5px;top:457.1px"></i>
<i style="left:70.5px;top:507.0px"></i>
<i style="left:70.5px;top:535.5px"></i>
<div id="sbar"><b></b><svg class="ic" style="left:4px;top:9px" width="3" height="3" viewBox="0 0 3 3"><path d="M0 3L3 0V3z" fill="#555"/></svg><svg class="ic" style="left:2px;top:858px" width="5" height="4" viewBox="0 0 5 4"><path d="M0 0h5v1L4 4z" fill="#8a8a8a"/></svg></div>
</div>
</body>
</html>
